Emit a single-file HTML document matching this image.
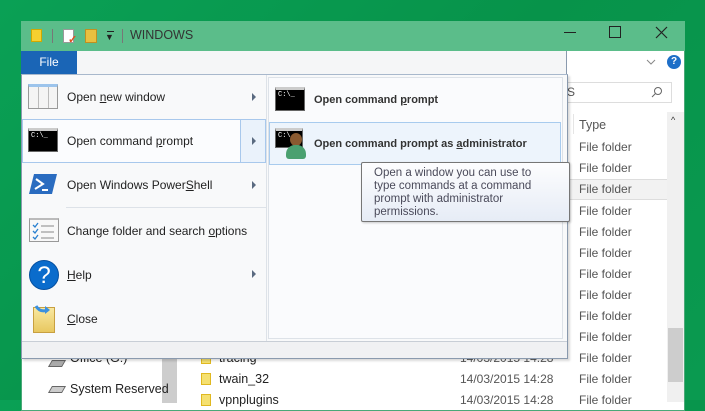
<!DOCTYPE html>
<html><head><meta charset="utf-8"><style>
*{margin:0;padding:0;box-sizing:border-box}
body{width:705px;height:400px;overflow:hidden;background:linear-gradient(135deg,#0aa055 0%,#07934a 50%,#0a9a50 100%);font-family:"Liberation Sans",sans-serif;font-size:12px;color:#222;position:relative}
.abs{position:absolute}
.win{left:21px;top:21px;width:664px;height:390px;background:#fff;border:1px solid #4aa878}
.title{left:21px;top:21px;width:664px;height:30px;background:#5bbd8a}
.t{position:absolute;white-space:nowrap}
.ff{color:#555;font-size:12px}
.u{text-decoration:underline}
.arr{position:absolute;width:0;height:0;border-left:4px solid #5a6a80;border-top:4px solid transparent;border-bottom:4px solid transparent}
.cmd{position:absolute;width:30px;height:24px;background:#000;border:1px solid #666;border-top:3px solid #ccc}
.cmd span{position:absolute;left:2px;top:1px;color:#fff;font:7px "Liberation Mono",monospace}
.b{font-weight:bold;font-size:11px;color:#333}
</style></head><body>
<div class="abs win"></div>
<div class="abs title"></div>
<div class="abs" style="left:31px;top:29px;width:11px;height:13px;background:#f5d030;border:1px solid #d0a800"></div>
<div class="abs" style="left:52px;top:29px;width:1px;height:14px;background:#777"></div>
<div class="abs" style="left:63px;top:29px;width:11px;height:14px;background:#fff;border:1px solid #999"></div>
<div class="abs t" style="left:68px;top:33px;color:#e05020;font-size:11px;font-weight:bold">✓</div>
<div class="abs" style="left:85px;top:29px;width:12px;height:14px;background:#e8c040;border:1px solid #c09020"></div>
<div class="abs t" style="left:105px;top:32px;font-size:9px;color:#222">▼</div>
<div class="abs" style="left:107px;top:31px;width:7px;height:1px;background:#222"></div>
<div class="abs" style="left:122px;top:29px;width:1px;height:14px;background:#777"></div>
<div class="abs t" style="left:130px;top:28px;font-size:12.5px;color:#333">WINDOWS</div>
<div class="abs" style="left:564px;top:32px;width:12px;height:1px;background:#222"></div>
<div class="abs" style="left:609px;top:26px;width:12px;height:12px;border:1px solid #222"></div>
<svg class="abs" style="left:655px;top:26px" width="13" height="13"><path d="M1 1L12 12M12 1L1 12" stroke="#222" stroke-width="1.2"/></svg>
<div class="abs" style="left:567px;top:51px;width:117px;height:24px;background:#fff"></div>
<svg class="abs" style="left:646px;top:59px" width="10" height="6"><path d="M1 1L5 5L9 1" stroke="#888" fill="none"/></svg>
<div class="abs" style="left:667px;top:55px;width:14px;height:14px;border-radius:50%;background:#1e6fc8;color:#fff;font-size:10px;font-weight:bold;text-align:center;line-height:14px">?</div>
<div class="abs" style="left:560px;top:82px;width:112px;height:21px;border:1px solid #ddd;background:#fff"></div>
<div class="t" style="left:567px;top:85px;color:#555">S</div>
<svg class="abs" style="left:651px;top:86px" width="12" height="12"><circle cx="7" cy="5" r="3.5" stroke="#666" fill="none"/><path d="M4.5 7.5L1 11" stroke="#666"/></svg>
<div class="abs" style="left:573px;top:114px;width:1px;height:20px;background:#e5e5e5"></div>
<div class="t ff" style="left:579px;top:118px;font-size:12.5px">Type</div>
<div class="abs" style="left:567px;top:179px;width:100px;height:21px;background:#f2f2f2;border-top:1px solid #ddd;border-bottom:1px solid #ddd"></div>
<div class="t ff" style="left:579px;top:140px">File folder</div>
<div class="t ff" style="left:579px;top:161px">File folder</div>
<div class="t ff" style="left:579px;top:182px">File folder</div>
<div class="t ff" style="left:579px;top:204px">File folder</div>
<div class="t ff" style="left:579px;top:225px">File folder</div>
<div class="t ff" style="left:579px;top:246px">File folder</div>
<div class="t ff" style="left:579px;top:267px">File folder</div>
<div class="t ff" style="left:579px;top:288px">File folder</div>
<div class="t ff" style="left:579px;top:309px">File folder</div>
<div class="t ff" style="left:579px;top:330px">File folder</div>
<div class="t ff" style="left:579px;top:351px">File folder</div>
<div class="t ff" style="left:579px;top:372px">File folder</div>
<div class="t ff" style="left:579px;top:393px">File folder</div>
<div class="abs" style="left:667px;top:112px;width:17px;height:290px;background:#f0f0f0"></div>
<div class="t" style="left:671px;top:115px;font-size:9px;color:#333">^</div>
<div class="abs" style="left:668px;top:328px;width:15px;height:54px;background:#cdcdcd"></div>
<div class="t ff" style="left:460px;top:351px">14/03/2015 14:28</div>
<div class="t ff" style="left:460px;top:372px">14/03/2015 14:28</div>
<div class="t ff" style="left:460px;top:393px">14/03/2015 14:28</div>
<div class="abs" style="left:201px;top:353px;width:10px;height:11px;background:#f5e070;border:1px solid #e0b820"></div>
<div class="abs" style="left:201px;top:373px;width:10px;height:12px;background:#f5e070;border:1px solid #e0b820"></div>
<div class="abs" style="left:201px;top:394px;width:10px;height:12px;background:#f5e070;border:1px solid #e0b820"></div>
<div class="t" style="left:219px;top:351px;font-size:12.5px">tracing</div>
<div class="t" style="left:219px;top:372px;font-size:12.5px">twain_32</div>
<div class="t" style="left:219px;top:393px;font-size:12.5px">vpnplugins</div>
<div class="abs" style="left:162px;top:358px;width:15px;height:45px;background:#cdcdcd"></div>
<div class="abs" style="left:50px;top:360px;width:14px;height:7px;background:#aaa;border:1px solid #666;transform:skewX(-30deg)"></div>
<div class="abs" style="left:50px;top:386px;width:14px;height:7px;background:#ccc;border:1px solid #666;transform:skewX(-30deg)"></div>
<div class="t" style="left:70px;top:351px;font-size:12.5px">Office (G:)</div>
<div class="t" style="left:70px;top:382px;font-size:12.5px">System Reserved</div>
<div class="abs" style="left:21px;top:51px;width:546px;height:24px;background:#f5f6f7;border-right:1px solid #8a9aae"></div>
<div class="abs" style="left:21px;top:51px;width:56px;height:23px;background:#1a65b6;color:#fff;text-align:center;line-height:23px;font-size:12px">File</div>
<div class="abs" style="left:21px;top:74px;width:547px;height:285px;background:#f8f9fa;border:1px solid #8a9aae;border-top:1px solid #a8b8cc;box-shadow:2px 2px 2px rgba(0,0,0,.15)"></div>
<div class="abs" style="left:22px;top:341px;width:545px;height:17px;background:#f0f1f3;border-top:1px solid #c8ced6"></div>
<div class="abs" style="left:266px;top:75px;width:1px;height:266px;background:#dde2e8"></div>
<div class="abs" style="left:268px;top:77px;width:295px;height:262px;background:#fafbfd;border:1px solid #dde2e8"></div>
<div class="abs" style="left:22px;top:119px;width:219px;height:44px;background:#fbfcfe;border:1px solid #a8c8ec"></div>
<div class="abs" style="left:241px;top:119px;width:25px;height:44px;background:#eaf2fb;border:1px solid #a8c8ec;border-left:none"></div>
<div class="abs" style="left:66px;top:207px;width:200px;height:1px;background:#dde2e8"></div>

<div class="abs" style="left:28px;top:84px;width:30px;height:25px;background:#f4f4f4;border:1px solid #999;border-top:3px solid #9cc4ec"></div>
<div class="abs" style="left:38px;top:87px;width:1px;height:21px;background:#bbb"></div>
<div class="abs" style="left:48px;top:87px;width:1px;height:21px;background:#bbb"></div>
<div class="t" style="left:67px;top:90px">Open <span class="u">n</span>ew window</div>
<div class="arr" style="left:252px;top:93px"></div>

<div class="cmd" style="left:28px;top:128px"><span>C:\_</span></div>
<div class="t" style="left:67px;top:134px">Open command <span class="u">p</span>rompt</div>
<div class="arr" style="left:252px;top:137px"></div>

<svg class="abs" style="left:28px;top:173px" width="30" height="22"><path d="M6 1H29L24 21H1Z" fill="#2a6cc0"/><path d="M8 6L15 11L7 16" stroke="#fff" stroke-width="2" fill="none"/><path d="M14 17H20" stroke="#fff" stroke-width="2"/></svg>
<div class="t" style="left:67px;top:178px">Open Windows Power<span class="u">S</span>hell</div>
<div class="arr" style="left:252px;top:181px"></div>

<div class="abs" style="left:29px;top:218px;width:30px;height:24px;background:#f8f8f8;border:1px solid #999;border-top:2px solid #bbb"></div>
<svg class="abs" style="left:32px;top:222px" width="24" height="18"><path d="M1 3L3 5L6 1M1 9L3 11L6 7M1 15L3 17L6 13" stroke="#2a80d0" fill="none" stroke-width="1.3"/><path d="M9 4H22M9 10H22M9 16H22" stroke="#888"/></svg>
<div class="t" style="left:67px;top:224px">Change folder and search <span class="u">o</span>ptions</div>

<div class="abs" style="left:29px;top:260px;width:30px;height:30px;border-radius:50%;background:#0a6ccc;border:1px solid #0550a0;color:#fff;font-size:24px;text-align:center;line-height:29px">?</div>
<div class="t" style="left:67px;top:268px"><span class="u">H</span>elp</div>
<div class="arr" style="left:252px;top:270px"></div>

<div class="abs" style="left:33px;top:307px;width:22px;height:26px;background:linear-gradient(#f8e8a0,#e8c860);border:1px solid #c8a040"></div>
<svg class="abs" style="left:34px;top:304px" width="18" height="12"><path d="M2 2Q6 9 14 6" stroke="#3a90e0" stroke-width="3" fill="none"/><path d="M11 2L16 6L11 10Z" fill="#3a90e0"/></svg>
<div class="t" style="left:67px;top:312px"><span class="u">C</span>lose</div>

<div class="cmd" style="left:275px;top:87px"><span>C:\_</span></div>
<div class="t b" style="left:314px;top:94px">Open command <span class="u">p</span>rompt</div>
<div class="abs" style="left:269px;top:122px;width:292px;height:43px;background:#edf4fc;border:1px solid #a8cbee"></div>
<div class="cmd" style="left:275px;top:128px;width:28px;height:20px"><span>C:\</span></div>
<div class="abs" style="left:290px;top:133px;width:12px;height:13px;border-radius:50%;background:#8a5a30"></div>
<div class="abs" style="left:286px;top:145px;width:20px;height:14px;border-radius:9px 9px 3px 3px;background:#4aa070"></div>
<div class="t b" style="left:314px;top:138px">Open command prompt as <span class="u">a</span>dministrator</div>
<div class="abs" style="left:361px;top:162px;width:209px;height:60px;background:linear-gradient(#fdfdfe,#e6ecf6);border:1px solid #767676;border-radius:2px;box-shadow:1px 1px 2px rgba(0,0,0,.2)"></div>
<div class="t" style="left:374px;top:167px;font-size:11.5px;line-height:13px;color:#4a4a5a">Open a window you can use to<br>type commands at a command<br>prompt with administrator<br>permissions.</div>
</body></html>
